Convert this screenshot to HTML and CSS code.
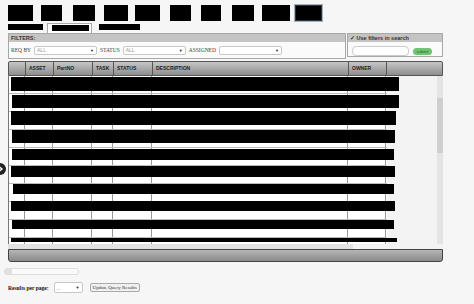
FILE: index.html
```html
<!DOCTYPE html>
<html>
<head>
<meta charset="utf-8">
<link rel="stylesheet" href="styles.css">
</head>
<body>
<div class="toolbar">
  <div class="slot s1"><span class="blk w25"></span></div>
  <div class="slot s2"><span class="blk w21"></span></div>
  <div class="slot s3"><span class="blk w22"></span></div>
  <div class="slot s4"><span class="blk w24"></span></div>
  <div class="slot s5"><span class="blk w25"></span></div>
  <div class="slot s6"><span class="blk w21"></span></div>
  <div class="slot s7"><span class="blk w20"></span></div>
  <div class="slot s8"><span class="blk w22"></span></div>
  <div class="slot s9"><span class="blk w28"></span></div>
  <div class="slot"><span class="blk w29 sel"></span></div>
</div>
<div class="tabs">
  <div class="tab"><span class="tblk w35"></span></div>
  <div class="tab active"><span class="tblk w37"></span></div>
  <div class="tab"><span class="tblk w41"></span></div>
</div>
<div class="filters">
  <div class="fpanel">
    <div class="fhead">FILTERS:</div>
    <div class="frow">
      <span class="lbl">REQ BY</span>
      <span class="sel-box sb1"><span>ALL</span><i>▼</i></span>
      <span class="lbl">STATUS</span>
      <span class="sel-box sb2"><span>ALL</span><i>▼</i></span>
      <span class="lbl">ASSIGNED</span>
      <span class="sel-box sb3"><span></span><i>▼</i></span>
    </div>
  </div>
  <div class="spanel">
    <div class="fhead">✓ Use filters in search</div>
    <div class="srow">
      <span class="sinput"></span>
      <span class="submit">submit</span>
    </div>
  </div>
</div>
<div class="grid">
  <div class="ghead">
    <div class="hc c0"></div>
    <div class="hc c1">ASSET</div>
    <div class="hc c2">PartNO</div>
    <div class="hc c3">TASK</div>
    <div class="hc c4">STATUS</div>
    <div class="hc c5">DESCRIPTION</div>
    <div class="hc c6">OWNER</div>
    <div class="hc c7"></div>
  </div>
  <div class="gbody">
    <div class="rows">
      <div class="row"><div class="cells"><i></i><i></i><i></i><i></i><i></i><i></i><i></i></div><span class="bar b1"></span></div>
      <div class="row"><div class="cells"><i></i><i></i><i></i><i></i><i></i><i></i><i></i></div><span class="bar b2"></span></div>
      <div class="row"><div class="cells"><i></i><i></i><i></i><i></i><i></i><i></i><i></i></div><span class="bar b3"></span></div>
      <div class="row"><div class="cells"><i></i><i></i><i></i><i></i><i></i><i></i><i></i></div><span class="bar b4"></span></div>
      <div class="row"><div class="cells"><i></i><i></i><i></i><i></i><i></i><i></i><i></i></div><span class="bar b5"></span></div>
      <div class="row"><div class="cells"><i></i><i></i><i></i><i></i><i></i><i></i><i></i></div><span class="bar b6"></span></div>
      <div class="row"><div class="cells"><i></i><i></i><i></i><i></i><i></i><i></i><i></i></div><span class="bar b7"></span></div>
      <div class="row"><div class="cells"><i></i><i></i><i></i><i></i><i></i><i></i><i></i></div><span class="bar b8"></span></div>
      <div class="row"><div class="cells"><i></i><i></i><i></i><i></i><i></i><i></i><i></i></div><span class="bar b9"></span></div>
      <div class="row"><div class="cells"><i></i><i></i><i></i><i></i><i></i><i></i><i></i></div><span class="bar b10"></span></div>
    </div>
    <div class="vscroll"><span class="vthumb"></span></div>
  </div>
  <div class="hstrip"><span class="hthumb"></span></div>
  <div class="gfoot"></div>
  <span class="pin"><svg width="12" height="12" viewBox="0 0 12 12"><circle cx="6" cy="6" r="6" fill="#222"/><path d="M5 3.5 L8 6 L5 8.5" stroke="#fff" stroke-width="1.4" fill="none"/></svg></span>
</div>
<div class="slider"><span class="knob"></span></div>
<div class="pager">
  <span class="rpp">Results per page:</span>
  <span class="sel-box sb4"><span>...</span><i>▼</i></span>
  <span class="btn">Update Query Results</span>
</div>
</body>
</html>
```

FILE: styles.css
```css
* { box-sizing: border-box; }
html, body { margin: 0; padding: 0; }
body {
  width: 474px;
  height: 304px;
  background: #f6f6f6;
  font-family: "Liberation Sans", Arial, sans-serif;
  overflow: hidden;
  position: relative;
}
.toolbar {
  display: flex;
  padding: 5px 0 0 8px;
  height: 23px;
}
.slot { height: 17px; }
.s1 { width: 33px; }
.s2 { width: 32px; }
.s3 { width: 31px; }
.s4 { width: 31px; }
.s5 { width: 35px; }
.s6 { width: 31px; }
.s7 { width: 31px; }
.s8 { width: 30px; }
.s9 { width: 32px; }
.blk { display: block; height: 16px; background: #000; }
.w20 { width: 20px; } .w21 { width: 21px; } .w22 { width: 22px; }
.w24 { width: 24px; } .w25 { width: 25px; } .w28 { width: 28px; }
.w29 { width: 29px; }
.w35 { width: 35px; } .w37 { width: 37px; } .w41 { width: 41px; }
.blk.sel {
  height: 18px;
  margin-top: -1px;
  border: 1px solid #9fb3c8;
  box-shadow: inset 0 0 0 1px #333;
}
.tabs {
  display: flex;
  padding-left: 8px;
  height: 10px;
  gap: 4px;
}
.tab { padding-top: 1px; }
.tab.active {
  width: 45px;
  padding: 1px 0 0 4px;
  background: #fff;
  border: 1px solid #aaa;
  border-bottom: none;
  height: 11px;
  margin-right: 3px;
}
.tblk { display: block; height: 6px; background: #000; }
.filters {
  display: flex;
  padding-left: 8px;
  gap: 1px;
}
.fpanel {
  width: 338px;
  height: 26px;
  border: 1px solid #a8a8a8;
  background: #fafafa;
}
.spanel {
  width: 96px;
  height: 24px;
  border: 1px solid #a8a8a8;
  background: #fafafa;
}
.fhead {
  height: 8px;
  background: #c4c4c4;
  font-size: 5.5px;
  font-weight: bold;
  color: #333;
  line-height: 8px;
  padding-left: 2px;
}
.frow {
  display: flex;
  align-items: center;
  height: 16px;
  padding-left: 2px;
  gap: 3px;
}
.lbl {
  font-family: "Liberation Serif", "Times New Roman", serif;
  font-size: 5.5px;
  color: #444;
}
.sel-box {
  display: flex;
  justify-content: space-between;
  align-items: center;
  height: 9px;
  border: 1px solid #c8c8c8;
  border-radius: 2px;
  background: #fff;
  font-size: 5px;
  color: #999;
  padding: 0 2px;
}
.sel-box i { font-style: normal; font-size: 4px; color: #222; }
.sb1 { width: 63px; }
.sb2 { width: 63px; }
.sb3 { width: 63px; }
.srow {
  display: flex;
  align-items: center;
  gap: 4px;
  padding: 4px 0 0 4px;
}
.sinput {
  width: 57px;
  height: 10px;
  border: 1px solid #ccc;
  border-radius: 4px;
  background: #fff;
}
.submit {
  width: 19px;
  height: 7px;
  border-radius: 4px;
  background: #6fc46f;
  color: #2a6a2a;
  font-size: 4px;
  line-height: 7px;
  text-align: center;
}
.grid {
  position: relative;
  margin: 2px 0 0 8px;
  width: 435px;
}
.ghead {
  display: flex;
  height: 15px;
  background: linear-gradient(#c6c6c6, #8e8e8e);
  border: 1px solid #555;
  border-radius: 2px 2px 0 0;
}
.hc {
  border-right: 1px solid #555;
  font-size: 5px;
  font-weight: bold;
  color: #222;
  line-height: 13px;
  padding-left: 3px;
}
.c0 { width: 17px; }
.c1 { width: 28px; }
.c2 { width: 39px; }
.c3 { width: 21px; }
.c4 { width: 39px; }
.c5 { width: 196px; }
.c6 { width: 38px; }
.c7 { flex: 1; border-right: none; }
.gbody {
  display: flex;
  height: 168px;
  border-left: 1px solid #777;
  background: #f3f3f3;
  overflow: hidden;
}
.rows { width: 428px; }
.row {
  position: relative;
  height: 18px;
}
.cells {
  display: flex;
  width: 378px;
  height: 18px;
  background: #fff;
  border-bottom: 1px solid #bbb;
}
.cells i {
  border-right: 1px solid #999;
  height: 100%;
}
.cells i:nth-child(1) { width: 16px; }
.cells i:nth-child(2) { width: 28px; }
.cells i:nth-child(3) { width: 39px; }
.cells i:nth-child(4) { width: 21px; }
.cells i:nth-child(5) { width: 39px; }
.cells i:nth-child(6) { width: 196px; }
.cells i:nth-child(7) { width: 38px; }
.bar {
  position: absolute;
  left: 2px;
  background: #000;
}
.b1 { top: 1px; height: 14px; width: 388px; }
.b2 { top: 1px; height: 13px; width: 387px; left: 3px; }
.b3 { top: -1px; height: 14px; width: 385px; }
.b4 { top: 0; height: 13px; width: 383px; left: 3px; }
.b5 { top: 1px; height: 11px; width: 382px; left: 3px; }
.b6 { top: 0; height: 11px; width: 384px; }
.b7 { top: 0; height: 10px; width: 381px; left: 4px; }
.b8 { top: -1px; height: 10px; width: 384px; }
.b9 { top: 0; height: 9px; width: 382px; left: 3px; }
.b10 { top: 0; height: 4px; width: 386px; }
.vscroll {
  width: 6px;
  background: #e4e4e4;
  position: relative;
}
.vthumb {
  display: block;
  height: 55px;
  margin-top: 22px;
  background: #cfcfcf;
}
.hstrip {
  height: 5px;
  background: #f3f3f3;
}
.hthumb {
  display: block;
  width: 345px;
  height: 5px;
  background: #e2e2e2;
}
.gfoot {
  height: 13px;
  background: linear-gradient(#b6b6b6, #8a8a8a);
  border: 1px solid #444;
  border-radius: 0 0 3px 3px;
}
.pin {
  position: absolute;
  left: -14px;
  top: 102px;
  line-height: 0;
}
.slider {
  margin: 6px 0 0 4px;
  width: 75px;
  height: 7px;
  border: 1px solid #ddd;
  border-radius: 3px;
  background: #fafafa;
}
.knob {
  display: block;
  width: 7px;
  height: 5px;
  background: #e0e0e0;
}
.pager {
  display: flex;
  align-items: center;
  gap: 5px;
  padding: 7px 0 0 8px;
}
.rpp {
  font-family: "Liberation Serif", "Times New Roman", serif;
  font-size: 5.5px;
  font-weight: bold;
  color: #111;
}
.sb4 { width: 29px; height: 11px; color: #666; }
.btn {
  font-family: "Liberation Serif", "Times New Roman", serif;
  font-size: 5px;
  color: #333;
  border: 1px solid #aaa;
  border-radius: 2px;
  background: #f0f0f0;
  padding: 1px 2px;
  margin-left: 2px;
}
```
